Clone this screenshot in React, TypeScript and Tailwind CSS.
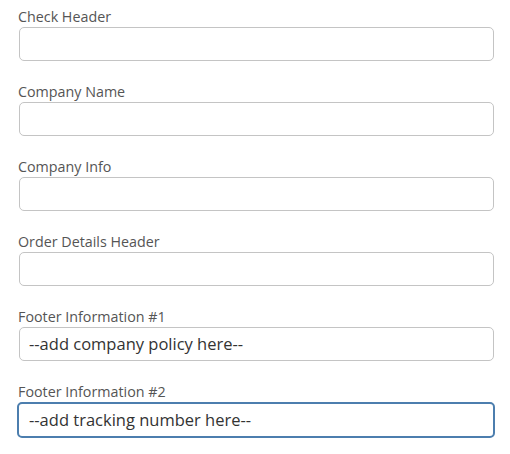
import React from "react";

const fields = [
  { label: "Check Header", value: "" },
  { label: "Company Name", value: "" },
  { label: "Company Info", value: "" },
  { label: "Order Details Header", value: "" },
  { label: "Footer Information #1", value: "--add company policy here--" },
  { label: "Footer Information #2", value: "--add tracking number here--", focused: true },
];

export default function App() {
  return (
    <div
      className="w-[510px] h-[454px] bg-white pt-[7px] pl-[18px]"
      style={{ fontFamily: '"Open Sans", "Noto Sans", sans-serif' }}
    >
      {fields.map((f) => (
        <div key={f.label} className="mb-[21px] flex flex-col">
          <label className="text-[14.3px] leading-[20px] text-[#555555]">{f.label}</label>
          {f.focused ? (
            <div className="-ml-[1px] w-[478px] h-[36px] rounded-[5px] border-2 border-[#4c7eae] flex items-center pl-[10px] text-[16.5px] text-[#333333]">
              {f.value}
            </div>
          ) : (
            <div className="ml-[1px] w-[475px] h-[34px] rounded-[5px] border border-[#c4c4c4] flex items-center pl-[9px] text-[16.5px] text-[#333333]">
              {f.value}
            </div>
          )}
        </div>
      ))}
    </div>
  );
}
